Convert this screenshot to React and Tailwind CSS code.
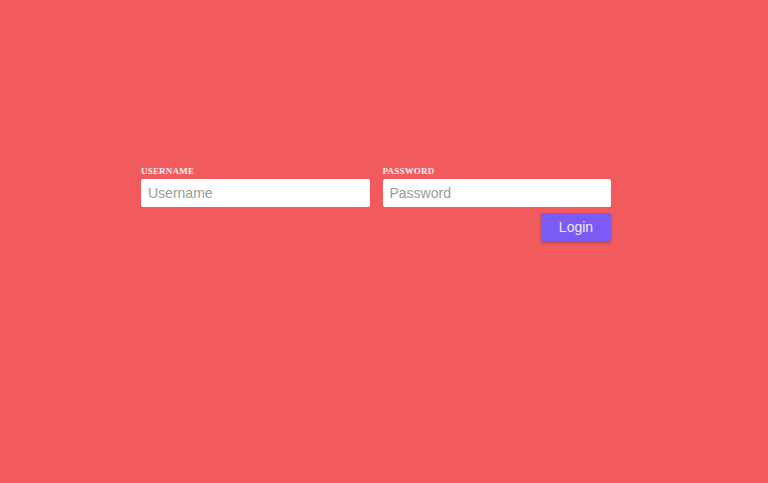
export default function App() {
  return (
    <div className="min-h-screen bg-[#f15b5d] pt-[166px] font-['Liberation_Sans',Arial,sans-serif]">
      <form className="ml-[141px] w-[470px]" onSubmit={(e) => e.preventDefault()}>
        <div className="flex gap-[13px]">
          <label className="flex flex-1 flex-col">
            <span className="mb-[2px] font-['Liberation_Serif',serif] text-[9px] font-bold uppercase leading-[11px] tracking-[0.2px] text-[#fdf1f1]">
              Username
            </span>
            <input
              type="text"
              placeholder="Username"
              className="h-[28px] w-full rounded-[2px] bg-white px-[7px] text-[14px] text-gray-700 placeholder-[#9a9a9a] outline-none"
            />
          </label>
          <label className="flex flex-1 flex-col">
            <span className="mb-[2px] font-['Liberation_Serif',serif] text-[9px] font-bold uppercase leading-[11px] tracking-[0.2px] text-[#fdf1f1]">
              Password
            </span>
            <input
              type="password"
              placeholder="Password"
              className="h-[28px] w-full rounded-[2px] bg-white px-[7px] text-[14px] text-gray-700 placeholder-[#9a9a9a] outline-none"
            />
          </label>
        </div>
        <div className="mt-[6px] flex justify-end">
          <button
            type="submit"
            className="h-[28px] w-[70px] rounded-[2px] bg-[#7a5bf3] text-[14px] text-[#efeaff] shadow-[0_2px_3px_rgba(0,0,0,0.25)]"
          >
            Login
          </button>
        </div>
      </form>
    </div>
  )
}
